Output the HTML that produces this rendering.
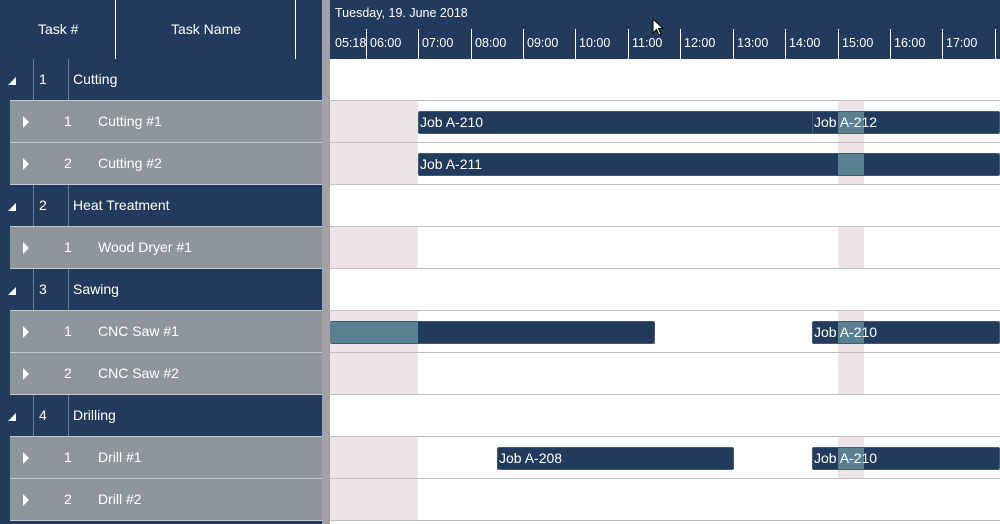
<!DOCTYPE html><html><head><style>
*{margin:0;padding:0;box-sizing:border-box}
html,body{width:1000px;height:524px;overflow:hidden}
body{background:#fff;font-family:"Liberation Sans",sans-serif;font-size:13px;color:#fff;position:relative}
.a{position:absolute}
.nv{background:#223a5c}
.gr{background:#8e959b}
.t{position:absolute;white-space:nowrap}
.bar{position:absolute;height:23px;background:#223a5c;border:1px solid #3d5a78;border-radius:2px}
.bt{position:absolute;color:#fff;font-size:14px;white-space:nowrap}
.pk{position:absolute;background:#ede4e5}
.tri{position:absolute;width:0;height:0}
</style></head><body>
<div class="a nv" style="left:0;top:0;width:1000px;height:59px"></div>
<div class="t" style="left:38px;top:21px;font-size:14px">Task #</div>
<div class="t" style="left:171px;top:21px;font-size:14px">Task Name</div>
<div class="a" style="left:115px;top:0;width:1px;height:59px;background:#fff"></div>
<div class="a" style="left:295px;top:0;width:1px;height:59px;background:#fff"></div>
<div class="t" style="left:335px;top:6px;font-size:12.5px">Tuesday, 19. June 2018</div>
<div id="hrs"></div>
<div id="rows"></div>
<div class="a nv" style="left:0;top:521px;width:322px;height:3px"></div>
<div class="a" style="left:322px;top:0;width:8px;height:524px;background:#a2a1a6"></div>
<script>
var h='';var xs=[366,418,471,523,575,628,680,733,785,838,890,942,995];
h+='<div class="t" style="left:335px;top:36px;font-size:12.5px">05:18</div>';
xs.forEach(function(x,i){h+='<div class="a" style="left:'+x+'px;top:29px;width:1px;height:30px;background:#fff"></div>';
if(x<990)h+='<div class="t" style="left:'+(x+4)+'px;top:36px;font-size:12.5px">'+String(6+i).padStart(2,'0')+':00</div>';});
document.getElementById('hrs').innerHTML=h;
var R=[['G',1,'Cutting'],['C',1,'Cutting #1',1],['C',2,'Cutting #2',1],['G',2,'Heat Treatment'],['C',1,'Wood Dryer #1',1],['G',3,'Sawing'],['C',1,'CNC Saw #1',1],['C',2,'CNC Saw #2',1],['G',4,'Drilling'],['C',1,'Drill #1',1],['C',2,'Drill #2',0]];
var s='';
R.forEach(function(r,i){var y=59+42*i;
if(r[0]=='G'){s+='<div class="a nv" style="left:0;top:'+y+'px;width:322px;height:42px"></div>';
s+='<div class="a" style="left:33px;top:'+y+'px;width:1px;height:42px;background:#6a7d96"></div><div class="a" style="left:68px;top:'+y+'px;width:1px;height:42px;background:#6a7d96"></div>';
s+='<div class="tri" style="left:8px;top:'+(y+18)+'px;border-left:8px solid transparent;border-bottom:8px solid #fff"></div>';
s+='<div class="t" style="left:39px;top:'+(y+12)+'px;font-size:14px">'+r[1]+'</div><div class="t" style="left:73px;top:'+(y+12)+'px;font-size:14px">'+r[2]+'</div>';}
else{s+='<div class="a nv" style="left:0;top:'+y+'px;width:10px;height:42px"></div><div class="a gr" style="left:10px;top:'+y+'px;width:312px;height:42px"></div>';
s+='<div class="tri" style="left:23px;top:'+(y+15)+'px;border-top:6px solid transparent;border-bottom:6px solid transparent;border-left:6px solid #fff"></div>';
s+='<div class="t" style="left:64px;top:'+(y+12)+'px;font-size:14px">'+r[1]+'</div><div class="t" style="left:98px;top:'+(y+12)+'px;font-size:14px">'+r[2]+'</div>';
s+='<div class="pk" style="left:330px;top:'+y+'px;width:88px;height:42px"></div>';
if(r[3])s+='<div class="pk" style="left:838px;top:'+y+'px;width:26px;height:42px"></div>';}
s+='<div class="a" style="left:10px;top:'+(y+41)+'px;width:312px;height:1px;background:#c5c8cc"></div>';
s+='<div class="a" style="left:330px;top:'+(y+41)+'px;width:670px;height:1px;background:#c0c0c4"></div>';
});
function bar(x,w,row){var y=59+42*row+10;return '<div class="bar" style="left:'+x+'px;top:'+y+'px;width:'+w+'px"></div>';}
function tx(x,row,txt){return '<div class="bt" style="left:'+(x+2)+'px;top:'+(59+42*row+13)+'px">'+txt+'</div>';}
function tl(x,w,row){return '<div class="a" style="left:'+x+'px;top:'+(59+42*row+11)+'px;width:'+w+'px;height:21px;background:#5a8090"></div>';}
s+=bar(418,396,1)+bar(812,188,1)+tl(838,26,1)+tx(418,1,'Job A-210')+tx(812,1,'Job A-212');
s+=bar(418,582,2)+tl(838,26,2)+tx(418,2,'Job A-211');
s+=bar(330,325,6)+tl(330,88,6)+bar(812,188,6)+tl(838,26,6)+tx(812,6,'Job A-210');
s+=bar(497,237,9)+bar(812,188,9)+tl(838,26,9)+tx(497,9,'Job A-208')+tx(812,9,'Job A-210');
document.getElementById('rows').innerHTML=s;
</script>
<svg class="a" style="left:652px;top:18px" width="12" height="20" viewBox="0 0 12 20"><path d="M1 1 L1 15 L4.5 11.5 L7 17 L9 16 L6.5 10.5 L11 10.5 Z" fill="#fff" stroke="#000" stroke-width="1"/></svg>
</body></html>
